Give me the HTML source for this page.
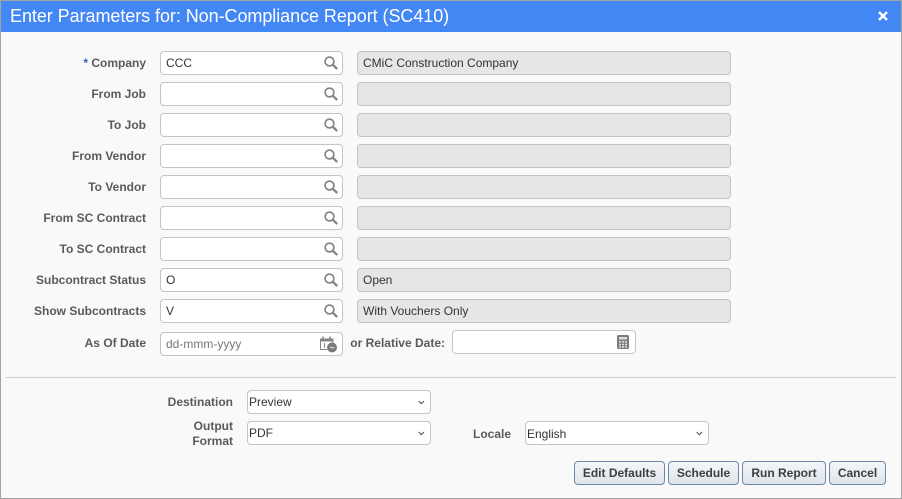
<!DOCTYPE html>
<html><head><meta charset="utf-8">
<style>
html,body{margin:0;padding:0;width:902px;height:499px;overflow:hidden;background:#f9f9f9;font-family:"Liberation Sans",sans-serif;}
#w{position:absolute;left:0;top:0;width:902px;height:499px;background:#f9f9f9;overflow:hidden}
.edge{position:absolute;background:#a3a3a3}
#title{position:absolute;left:1px;top:1px;width:900px;height:31px;background:#4387f4;color:#fff;font-size:18px;line-height:30px;text-indent:9px;letter-spacing:-.06px;white-space:nowrap}
.l{position:absolute;right:756px;font-size:12px;font-weight:bold;color:#5a5a5a;line-height:14px;white-space:nowrap;text-align:right}
.i,.r,.s{position:absolute;box-sizing:border-box;height:24px;border:1px solid #c4c4c4;border-radius:4px;background:#fff;font-size:12px;line-height:22px;color:#333;white-space:nowrap}
.i{left:160px;width:183px;padding-left:5px}
.r{left:357px;width:374px;background:#e6e6e6;padding-left:5px}
.s{padding-left:1px}
.i svg,.s svg{position:absolute}
.b{position:absolute;top:461px;box-sizing:border-box;height:24px;border:1px solid #6c8aa5;border-radius:4px;background:linear-gradient(#f4f6f8,#dfe4e9);font-size:12px;font-weight:bold;color:#3c4043;text-align:center;line-height:22px;white-space:nowrap}
</style></head><body>
<div id="w">
<div class="edge" style="left:0;top:0;width:902px;height:1px"></div>
<div class="edge" style="left:0;top:0;width:1px;height:499px"></div>
<div class="edge" style="right:0;top:0;width:1px;height:499px"></div>
<div class="edge" style="left:0;top:498px;width:902px;height:1px"></div>
<div id="title">Enter Parameters for: Non-Compliance Report (SC410)</div>
<svg style="position:absolute;left:878px;top:11px" width="10" height="10" viewBox="0 0 10 10"><path d="M1 1L9 9M9 1L1 9" stroke="#fff" stroke-width="2.4"/></svg>
<svg width="0" height="0" style="position:absolute"><defs><g id="m"><circle cx="5.5" cy="5.5" r="4.4" fill="none" stroke="#858585" stroke-width="1.7"/><path d="M8.7 8.7L13.2 13" stroke="#858585" stroke-width="2.3"/></g></defs></svg>

<div class="l" style="top:56px"><span style="color:#2f5fc4">*</span> Company</div>
<div class="i" style="top:51px">CCC<svg style="left:163px;top:4px" width="14" height="14"><use href="#m"/></svg></div>
<div class="r" style="top:51px">CMiC Construction Company</div>

<div class="l" style="top:87px">From Job</div>
<div class="i" style="top:82px"><svg style="left:163px;top:4px" width="14" height="14"><use href="#m"/></svg></div>
<div class="r" style="top:82px"></div>

<div class="l" style="top:118px">To Job</div>
<div class="i" style="top:113px"><svg style="left:163px;top:4px" width="14" height="14"><use href="#m"/></svg></div>
<div class="r" style="top:113px"></div>

<div class="l" style="top:149px">From Vendor</div>
<div class="i" style="top:144px"><svg style="left:163px;top:4px" width="14" height="14"><use href="#m"/></svg></div>
<div class="r" style="top:144px"></div>

<div class="l" style="top:180px">To Vendor</div>
<div class="i" style="top:175px"><svg style="left:163px;top:4px" width="14" height="14"><use href="#m"/></svg></div>
<div class="r" style="top:175px"></div>

<div class="l" style="top:211px">From SC Contract</div>
<div class="i" style="top:206px"><svg style="left:163px;top:4px" width="14" height="14"><use href="#m"/></svg></div>
<div class="r" style="top:206px"></div>

<div class="l" style="top:242px">To SC Contract</div>
<div class="i" style="top:237px"><svg style="left:163px;top:4px" width="14" height="14"><use href="#m"/></svg></div>
<div class="r" style="top:237px"></div>

<div class="l" style="top:273px">Subcontract Status</div>
<div class="i" style="top:268px">O<svg style="left:163px;top:4px" width="14" height="14"><use href="#m"/></svg></div>
<div class="r" style="top:268px">Open</div>

<div class="l" style="top:304px">Show Subcontracts</div>
<div class="i" style="top:299px">V<svg style="left:163px;top:4px" width="14" height="14"><use href="#m"/></svg></div>
<div class="r" style="top:299px">With Vouchers Only</div>

<div class="l" style="top:336px">As Of Date</div>
<div class="i" style="top:332px;color:#777">dd-mmm-yyyy<svg style="left:159px;top:3px;overflow:visible" width="18" height="17" viewBox="0 0 18 17"><path d="M0.5 3.5H13V8M0.5 3.5V13.5H7" fill="none" stroke="#858585"/><path d="M0 2.5H13.5V5.5H0z" fill="#858585"/><path d="M3 0.5V3M10 0.5V3" stroke="#858585" stroke-width="1.6"/><path d="M4.5 7V12" stroke="#858585"/><circle cx="12" cy="11.5" r="5" fill="#7a7a7a"/><path d="M9.8 10.5L12 12L14.5 11.5" fill="none" stroke="#e6e6e6"/></svg></div>
<div class="l" style="top:336px;right:457px">or Relative Date:</div>
<div class="i" style="left:452px;top:330px;width:184px"><svg style="left:164px;top:4px" width="13" height="15" viewBox="0 0 13 15"><rect x="0" y="0" width="12" height="14" rx="1.5" fill="#7d7d7d"/><rect x="2" y="2" width="8" height="2.5" fill="#ddd"/><path d="M2 6h2v1.5H2zM5 6h2v1.5H5zM8 6h2v1.5H8zM2 8.7h2v1.5H2zM5 8.7h2v1.5H5zM8 8.7h2v1.5H8zM2 11.3h2v1.5H2zM5 11.3h2v1.5H5zM8 11.3h2v1.5H8z" fill="#e4e4e4"/></svg></div>

<div style="position:absolute;left:6px;top:377px;width:890px;height:1px;background:#cfcfcf"></div>

<div class="l" style="top:395px;right:669px">Destination</div>
<div class="s" style="left:247px;top:390px;width:184px">Preview<svg style="left:170px;top:9px" width="7" height="6"><path d="M0.7 1L3.3 3.7L6 1" fill="none" stroke="#555" stroke-width="1.1"/></svg></div>
<div class="l" style="top:419px;right:669px;line-height:15px">Output<br>Format</div>
<div class="s" style="left:247px;top:421px;width:184px">PDF<svg style="left:170px;top:9px" width="7" height="6"><path d="M0.7 1L3.3 3.7L6 1" fill="none" stroke="#555" stroke-width="1.1"/></svg></div>
<div class="l" style="top:427px;right:391px">Locale</div>
<div class="s" style="left:525px;top:421px;width:184px;line-height:24px">English<svg style="left:170px;top:9px" width="7" height="6"><path d="M0.7 1L3.3 3.7L6 1" fill="none" stroke="#555" stroke-width="1.1"/></svg></div>

<div class="b" style="left:574px;width:91px">Edit Defaults</div>
<div class="b" style="left:668px;width:71px">Schedule</div>
<div class="b" style="left:742px;width:84px">Run Report</div>
<div class="b" style="left:829px;width:57px">Cancel</div>
</div>
</body></html>
